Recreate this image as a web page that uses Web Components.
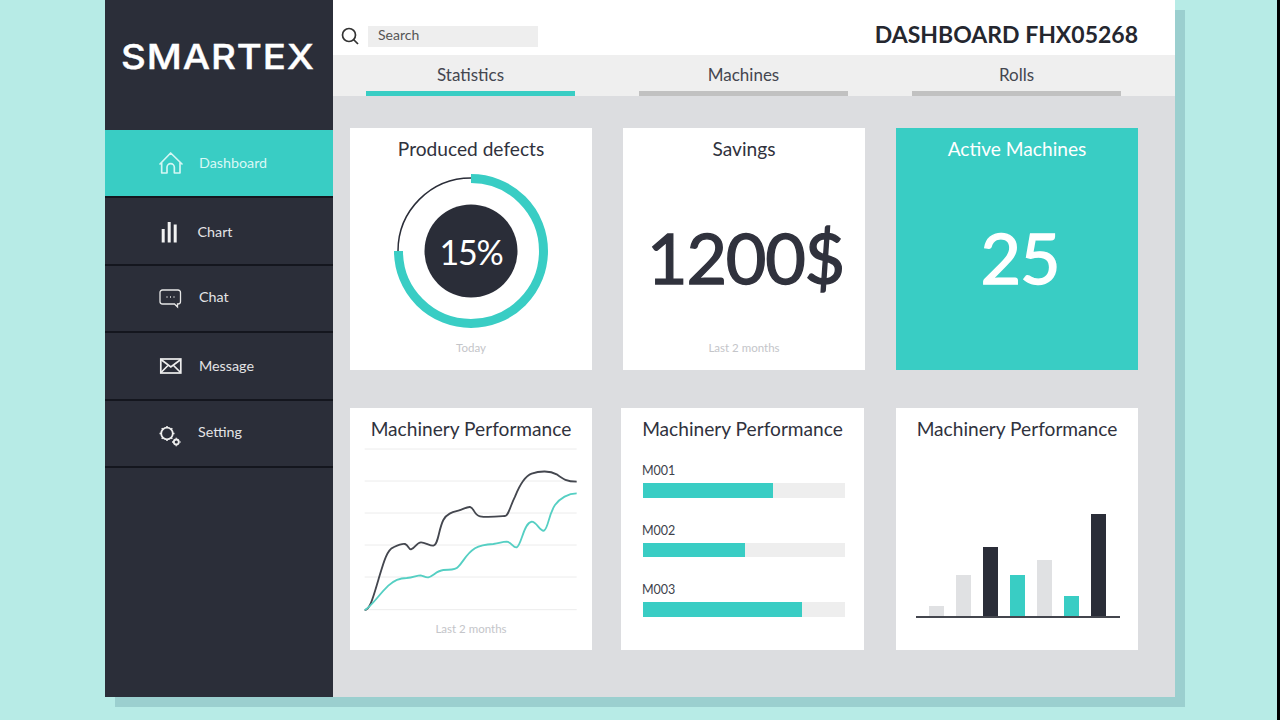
<!DOCTYPE html>
<html lang="en"><head><meta charset="utf-8"><title>Smartex dashboard</title>
<style>
html,body{margin:0;padding:0;height:720px;overflow:hidden;background:#b7ebe6;font-family:Lato,"Open Sans",sans-serif}
</style></head><body>
<sm-app>
  <sm-sidebar slot="side">
    <sm-nav active label="Dashboard" icon="home" gap="16" lift="2"></sm-nav>
    <sm-nav label="Chart" icon="chart" gap="14.500"></sm-nav>
    <sm-nav label="Chat" icon="chat" gap="16" h="67" lift="5"></sm-nav>
    <sm-nav label="Message" icon="mail" gap="16" lift="2"></sm-nav>
    <sm-nav label="Setting" icon="gear" gap="15" h="67" lift="5"></sm-nav>
  </sm-sidebar>
  <sm-topbar slot="top" title="DASHBOARD FHX05268"></sm-topbar>
  <sm-tabs slot="top"></sm-tabs>
  <sm-row gap="31" top="32">
    <sm-card heading="Produced defects" foot="Today"><sm-donut value="15%"></sm-donut></sm-card>
    <sm-card heading="Savings" foot="Last 2 months"><sm-big shift="3">1200$</sm-big></sm-card>
    <sm-card heading="Active Machines" accent><sm-big shift="6">25</sm-big></sm-card>
  </sm-row>
  <sm-row gap="29" top="38">
    <sm-card heading="Machinery Performance" foot="Last 2 months" fh="29"><sm-lines></sm-lines></sm-card>
    <sm-card heading="Machinery Performance" style="width:243px"><sm-hbars></sm-hbars></sm-card>
    <sm-card heading="Machinery Performance" style="margin-left:3px"><sm-vbars></sm-vbars></sm-card>
  </sm-row>
</sm-app>
<script>
const def=(n,html)=>customElements.define(n,class extends HTMLElement{
  connectedCallback(){ if(this.shadowRoot)return; const r=this.attachShadow({mode:'open'}); r.innerHTML=typeof html==='function'?html(this):html; }
});
const teal='#39cdc4',ink='#2a2d38';
def('sm-app',`<style>
:host{display:block;height:720px;box-sizing:border-box;padding-left:105px;border-right:3px solid #000}
.win{width:1070px;height:697px;display:flex;box-shadow:10px 10px 0 #9bcfcf;background:#dcdde0}
.side{width:228px;flex:none;display:flex}
.main{flex:1;display:flex;flex-direction:column;min-width:0}
.body{padding-left:17px;display:flex;flex-direction:column}
</style><div class="win"><div class="side"><slot name="side"></slot></div><div class="main"><slot name="top"></slot><div class="body"><slot></slot></div></div></div>`);
def('sm-sidebar',`<style>
:host{display:block;width:228px;background:#2b2e39;box-sizing:border-box}
.logo{height:130px;display:flex;align-items:center;box-sizing:border-box;padding:0 0 17px 16px;color:#fff;overflow:hidden}
.logo span{font:500 32px Inter,"Liberation Sans",sans-serif;letter-spacing:.8px;line-height:1;transform-origin:0 50%;transform:translateY(.5px) scale(1.2,1.07);white-space:nowrap;-webkit-text-stroke:.4px #fff}
</style><div class="logo"><span>SMARTEX</span></div><slot></slot>`);
const icons={
home:`<svg width="24" height="22" viewBox="0 0 72 66" fill="none" stroke="#d4f6f3" stroke-width="5" stroke-linejoin="round" stroke-linecap="round"><path d="M3 36 35 3l34 33M8 31v32h16V46a11 11 0 0 1 22 0v17h17V31"/></svg>`,
chart:`<svg width="24" height="22" viewBox="0 -1 24 22" fill="#f2f2f2"><rect x="2.700" y="8" width="3" height="13.500"/><rect x="8.700" y="1" width="3" height="20.500"/><rect x="14.700" y="3.500" width="3" height="18"/></svg>`,
chat:`<svg width="24" height="19" viewBox="0 0 24 19" fill="none" stroke="#e6e6e6" stroke-width="1.300"><path d="M3.500 1h15.500a2.500 2.500 0 0 1 2.500 2.500v9a2.500 2.500 0 0 1-2.500 2.500h-.5v3l-3-3H3.500A2.500 2.500 0 0 1 1 12.500v-9A2.500 2.500 0 0 1 3.500 1z"/><path d="M7.500 8h1M11 8h1M14.500 8h1"/></svg>`,
mail:`<svg width="24" height="16" viewBox="0 0 24 16" fill="none" stroke="#eee" stroke-width="1.700"><rect x="1.800" y="1" width="20" height="14"/><path d="M2 1.500 11.800 9l10-7.500M2 14.500 9 7.500M21.600 14.500l-7-7"/></svg>`,
gear:`<svg width="24" height="22" viewBox="0 -1.500 24 22" fill="none" stroke="#eee"><circle cx="8" cy="9" r="5.800" stroke-width="1.800"/><circle cx="17.300" cy="17.500" r="2.500" stroke-width="1.800"/><path d="M8 1.500v2M8 14.500v2M.5 9h2M13.500 9h2M2.700 3.700l1.400 1.400M11.900 12.900l1.400 1.400M13.300 3.700l-1.400 1.400M2.700 14.300l1.400-1.400M17.300 13.200v1M17.300 20.800v1M13 17.500h1M20.600 17.500h1" stroke-width="1.500"/></svg>`};
def('sm-nav',h=>{const act=h.hasAttribute('active');const name=h.getAttribute('icon');
return `<style>
:host{display:block;height:${h.getAttribute('h')||68}px;box-sizing:border-box;border-bottom:2px solid #14161e;background:${act?teal:'transparent'}}
.r{height:100%;box-sizing:border-box;display:flex;align-items:center;padding-left:54px;gap:${h.getAttribute('gap')}px;color:${act?'#d9f8f5':'#e4e4e6'};font:14.300px Lato,sans-serif}
svg{display:block;flex:none;overflow:visible}
span{margin-bottom:${h.getAttribute('lift')||0}px}
</style><div class="r">${icons[name]}<span>${h.getAttribute('label')}</span></div>`});
def('sm-topbar',h=>`<style>
:host{display:flex;height:55px;align-items:flex-end;background:#fff;box-sizing:border-box;padding:0 37px 8px 8px}
svg{flex:none;margin-right:9px;margin-bottom:2px}
.s{width:170px;height:21px;background:#eeeeee;box-sizing:border-box;padding-left:10px;font:14px/18px Lato,sans-serif;color:#555}
h1{margin:0 0 0 auto;font:700 23px/26px Lato,sans-serif;color:#25272f}
</style><svg width="18" height="18" viewBox="0 0 18 18" fill="none" stroke="#333" stroke-width="1.700"><circle cx="8" cy="8" r="6.500"/><path d="m12.500 12.500 4.500 4.500"/></svg><div class="s">Search</div><h1>${h.getAttribute('title')}</h1>`);
def('sm-tabs',`<style>
:host{display:flex;height:41px;background:#efefef;padding-left:33px;gap:64px}
div{width:209px;box-sizing:border-box;text-align:center;font:17px/39px Lato,sans-serif;color:#44464f;border-bottom:5px solid #c1c1c1;height:41px;}
.a{border-bottom-color:${teal}}
</style><div class="a">Statistics</div><div>Machines</div><div>Rolls</div>`);
def('sm-row',h=>`<style>:host{display:flex;gap:${h.getAttribute('gap')}px;margin-top:${h.getAttribute('top')}px}</style><slot></slot>`);
def('sm-card',h=>{const a=h.hasAttribute('accent');const f=h.getAttribute('foot');
return `<style>
:host{display:block;width:242px;height:242px;flex:none;background:${a?teal:'#fff'};color:${a?'#fff':'#30323d'}}
.c{height:100%;box-sizing:border-box;display:flex;flex-direction:column;align-items:center}
h2{margin:0;padding-top:8px;font:400 19.150px/26px Lato,sans-serif;white-space:nowrap}
.m{flex:1;align-self:stretch;min-height:0;display:flex;flex-direction:column}
.f{height:${h.getAttribute('fh')||30}px;font:11.500px/16px Lato,sans-serif;color:#c4c5c9;flex:none}
.a{padding-bottom:30px}
</style><div class="c ${a?'a':''}"><h2>${h.getAttribute('heading')}</h2><div class="m"><slot></slot></div>${f?`<div class="f">${f}</div>`:''}</div>`});
def('sm-big',h=>`<style>:host{display:flex;flex:1;align-items:center;justify-content:center;font:400 70px/1 Lato,sans-serif;-webkit-text-stroke:1.400px currentColor;letter-spacing:-1.200px;color:inherit;padding:12px 0 0 ${h.getAttribute('shift')||0}px}</style><slot></slot>`);
def('sm-donut',h=>`<style>
:host{display:flex;flex:1;justify-content:center;padding-top:11px}
.w{width:156px;height:156px;position:relative}
svg{display:block}
.t{position:absolute;left:0;right:0;top:0;height:156px;display:flex;align-items:center;justify-content:center;color:#fff;font:400 34px Lato,sans-serif;letter-spacing:-1.300px}
</style><div class="w"><svg width="156" height="156" viewBox="0 0 156 156" fill="none">
<circle cx="78" cy="78" r="73" stroke="#2a2d38" stroke-width="1.500"/>
<path d="M78 5.500A72.500 72.500 0 1 1 5.500 78" stroke="${teal}" stroke-width="9"/>
<circle cx="78" cy="78" r="46.500" fill="${ink}"/></svg><div class="t">${h.getAttribute('value')}</div></div>`);
def('sm-lines',`<style>:host{display:block}svg{display:block;margin-top:-2px}</style>
<svg width="240" height="183" viewBox="0 0 720 549" fill="none">
<g stroke="#ececec" stroke-width="3"><path d="M44 27H680M44 123H680M44 219H680M44 315H680M44 411H680M44 509H680"/></g>
<path stroke="#44474f" stroke-width="5.500" d="M44 510C60 510 70 470 85 420C100 370 110 330 130 322C145 315 155 310 165 312C175 315 175 328 183 328C195 325 200 307 213 307C225 307 240 318 250 317C265 315 265 270 280 240C290 220 310 216 325 212C340 208 350 200 360 201C372 203 372 225 390 229C410 233 440 230 465 228C475 228 480 200 495 170C505 145 520 110 545 101C570 92 600 92 620 103C640 118 650 125 680 125"/>
<path stroke="#55cfc3" stroke-width="5.500" d="M44 510C60 505 90 460 115 437C135 418 150 414 170 414C190 413 200 406 212 406C222 408 225 413 235 412C250 408 260 392 280 390C300 388 315 392 325 380C340 365 350 340 375 325C390 316 410 313 430 312C450 310 455 305 470 305C485 306 490 325 500 322C515 315 520 250 545 245C560 245 570 275 582 272C595 265 595 225 615 195C630 175 655 160 680 160"/>
</svg>`);
def('sm-hbar',h=>`<style>
:host{display:block;height:59.500px}
.l{font:12.500px/15px Lato,sans-serif;color:#40424b;margin-left:-1px;height:20px}
.t{height:14.500px;background:#eeeeee;width:202px}
.v{height:100%;background:${teal};width:${h.getAttribute('v')}px}
</style><div class="l">${h.getAttribute('label')}</div><div class="t"><div class="v"></div></div>`);
def('sm-hbars',`<style>:host{display:block;padding:21px 0 0 22px}</style>
<sm-hbar label="M001" v="130"></sm-hbar><sm-hbar label="M002" v="102"></sm-hbar><sm-hbar label="M003" v="159"></sm-hbar>`);
def('sm-vbars',`<style>
:host{display:flex;flex:1;margin:0 18px 32px 20px;align-items:flex-end;gap:12px;padding-left:13px;border-bottom:2px solid #44464e}
i{display:block;width:15px;background:#e0e1e3}.d{background:${ink}}.t{background:${teal}}
</style><i style="height:10px"></i><i style="height:41px"></i><i class="d" style="height:69px"></i><i class="t" style="height:41px"></i><i style="height:56px"></i><i class="t" style="height:20px"></i><i class="d" style="height:102px"></i>`);
</script>
</body></html>
